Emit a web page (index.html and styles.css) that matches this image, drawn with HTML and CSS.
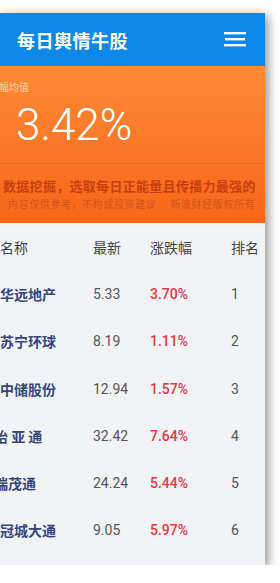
FILE: index.html
```html
<!DOCTYPE html>
<html>
<head>
  <meta charset="utf-8">
  <title>每日輿情牛股</title>
  <link rel="stylesheet" href="styles.css">
</head>
<body>
  <div class="screen">
    <div class="topbar">
      <span class="title">每日輿情牛股</span>
      <svg class="menu" width="22" height="16" viewBox="0 0 22 16">
        <rect x="0" y="1" width="22" height="2.4" fill="#fff"/>
        <rect x="1" y="7" width="20" height="2.4" fill="#fff"/>
        <rect x="0" y="13" width="22" height="2.4" fill="#fff"/>
      </svg>
    </div>
    <div class="hero">
      <div class="label">涨幅均值</div>
      <div class="value">3.42%</div>
      <div class="divider"></div>
      <div class="desc">数据挖掘，选取每日正能量且传播力最强的</div>
      <div class="note"><span>内容仅供参考，不构成投资建议</span><span class="src">新浪财经版权所有</span></div>
    </div>
    <div class="table">
      <div class="row head">
        <span>名称</span><span>最新</span><span>涨跌幅</span><span>排名</span>
      </div>
      <div class="row">
        <span class="name">华远地产</span><span>5.33</span><span class="up">3.70%</span><span>1</span>
      </div>
      <div class="row">
        <span class="name">苏宁环球</span><span>8.19</span><span class="up">1.11%</span><span>2</span>
      </div>
      <div class="row">
        <span class="name">中储股份</span><span>12.94</span><span class="up">1.57%</span><span>3</span>
      </div>
      <div class="row">
        <span class="name shift">怡 亚 通</span><span>32.42</span><span class="up">7.64%</span><span>4</span>
      </div>
      <div class="row">
        <span class="name shift">瑞茂通</span><span>24.24</span><span class="up">5.44%</span><span>5</span>
      </div>
      <div class="row">
        <span class="name">冠城大通</span><span>9.05</span><span class="up">5.97%</span><span>6</span>
      </div>
    </div>
  </div>
</body>
</html>
```

FILE: styles.css
```css
body {
  margin: 0;
  background: #fff;
  font-family: Roboto, "Noto Sans CJK SC", sans-serif;
}
.screen {
  width: 265px;
  height: 552px;
  margin-top: 13px;
  overflow: hidden;
  background: #f2f3f7;
  box-shadow: 3px 3px 10px rgba(0,0,0,0.45);
}
.topbar {
  height: 53px;
  background: #0d88e8;
  display: flex;
  align-items: center;
  justify-content: space-between;
  padding: 0 19px 0 17px;
}
.title {
  color: #fff;
  font-size: 18px;
  font-weight: bold;
  letter-spacing: 0.5px;
  font-family: "Noto Sans CJK SC", sans-serif;
}
.menu { display: block; margin-top: -2px; }
.hero {
  height: 157px;
  background: linear-gradient(#ff8a37, #f7661a);
  overflow: hidden;
  white-space: nowrap;
}
.label {
  color: #ffd2b0;
  font-size: 10px;
  margin: 13px 0 0 -11px;
  font-family: "Noto Sans CJK SC", sans-serif;
}
.value {
  color: #fff;
  font-size: 44px;
  font-weight: 300;
  margin: 6px 0 0 16px;
  line-height: 50px;
}
.divider {
  height: 1px;
  background: #ea6a22;
  margin-top: 13px;
}
.desc {
  color: #c93f0d;
  font-size: 13px;
  font-weight: bold;
  letter-spacing: 0.3px;
  margin: 12px 0 0 3px;
  font-family: "Noto Sans CJK SC", sans-serif;
}
.note {
  color: #d0521a;
  font-size: 10px;
  letter-spacing: 0.6px;
  margin: 1px 0 0 8px;
  line-height: 16px;
  font-family: "Noto Sans CJK SC", sans-serif;
}
.note .src { margin-left: 14px; }
.row {
  display: grid;
  grid-template-columns: 93px 57px 80px 1fr;
  align-items: center;
  height: 47.3px;
  font-size: 14px;
  color: #555;
}
.row.head { color: #444; font-family: "Noto Sans CJK SC", sans-serif; }
.row > span:last-child { padding-left: 1px; }
.name {
  color: #34467a;
  font-weight: bold;
  font-family: "Noto Sans CJK SC", sans-serif;
}
.name.shift { margin-left: -6px; }
.up { color: #e63a3e; font-weight: 500; }
```
